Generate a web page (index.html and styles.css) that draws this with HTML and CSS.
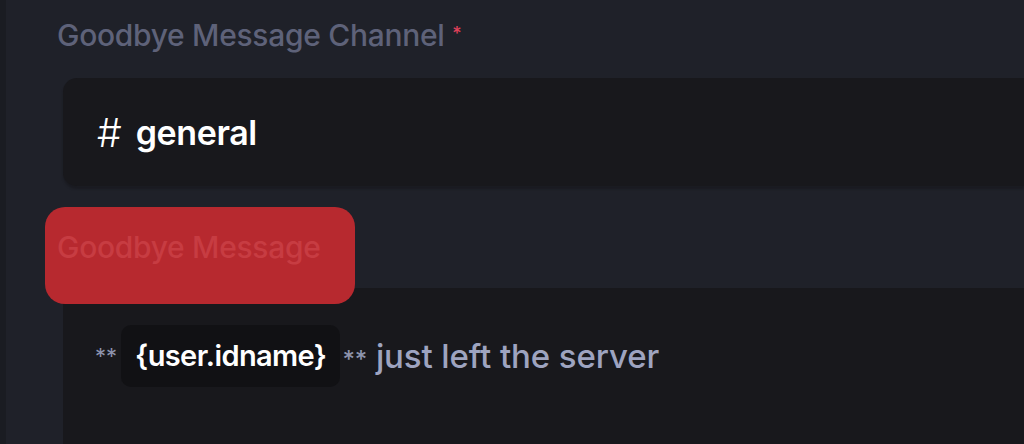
FILE: index.html
```html
<!DOCTYPE html>
<html>
<head>
<meta charset="utf-8">
<link rel="stylesheet" href="styles.css">
</head>
<body>
<div class="page">
  <div class="field">
    <div class="label">Goodbye Message Channel <span class="req">*</span></div>
    <div class="select">
      <span class="hash">#</span><span class="channel">general</span>
    </div>
  </div>
  <div class="field second">
    <div class="label highlight">Goodbye Message</div>
    <div class="message">
      <span class="stars">**</span>
      <span class="pill">{user.idname}</span>
      <span class="text"><span class="stars2">**</span> just left the server</span>
    </div>
  </div>
</div>
</body>
</html>
```

FILE: styles.css
```css
html, body {
  margin: 0;
  padding: 0;
  background: #1f2129;
  height: 100%;
  overflow: hidden;
}
body {
  font-family: Inter, "Open Sans", sans-serif;
}
.page {
  border-left: 6px solid #1a1c22;
  height: 100%;
  box-sizing: border-box;
  padding: 16px 0 0 51px;
  display: flex;
  flex-direction: column;
}
.label {
  color: #5e6279;
  font-size: 30px;
  font-weight: 500;
  line-height: 36px;
  letter-spacing: -0.3px;
}
.req {
  color: #e0405a;
  font-size: 18px;
  vertical-align: 6px;
}
.select {
  margin: 25px 0 0 6px;
  height: 108px;
  background: #18181c;
  border-radius: 14px 0 0 14px;
  box-shadow: 0 3px 2px #1a1b21;
  display: flex;
  align-items: center;
  padding-left: 34px;
  color: #ffffff;
}
.hash {
  font-size: 39px;
  font-weight: 300;
  margin-right: 14px;
}
.channel {
  font-size: 34px;
  font-weight: 600;
  letter-spacing: -0.4px;
}
.second {
  margin-top: 21px;
  flex: 1;
  display: flex;
  flex-direction: column;
  align-items: flex-start;
}
.highlight {
  position: relative;
  z-index: 1;
  margin-left: -12px;
  width: 310px;
  height: 97px;
  box-sizing: border-box;
  padding: 22px 0 0 12px;
  background: #b7292f;
  color: #c73c42;
  border-radius: 20px;
}
.message {
  align-self: stretch;
  flex: 1;
  margin: -16px 0 0 6px;
  background: #18181c;
  display: flex;
  align-items: flex-start;
  padding: 37px 0 0 32px;
  box-sizing: border-box;
}
.stars {
  color: #8d93ad;
  font-size: 22px;
  line-height: 62px;
  margin-right: 4px;
}
.pill {
  background: #111114;
  border-radius: 10px;
  height: 62px;
  line-height: 62px;
  padding: 0 14px;
  color: #ffffff;
  font-size: 29px;
  font-weight: 600;
  letter-spacing: -0.6px;
}
.text {
  color: #9ea4c0;
  font-size: 33px;
  font-weight: 500;
  line-height: 62px;
  margin-left: 2px;
  letter-spacing: -0.1px;
}
.stars2 {
  color: #8d93ad;
  font-size: 24px;
}
```
